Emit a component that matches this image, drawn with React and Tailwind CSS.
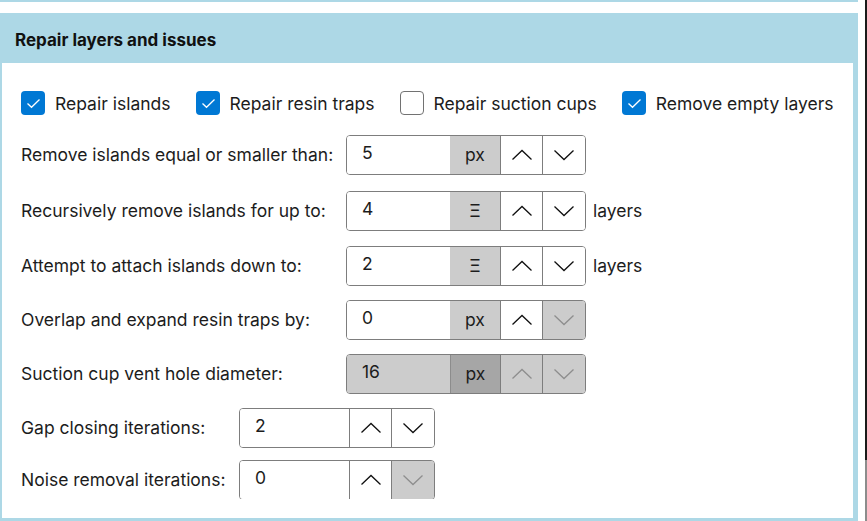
import React from 'react';

const FONT = { fontFamily: 'Inter, "Noto Sans", sans-serif' };

function Chevron({ up, color = '#111' }) {
    return (
        <svg width="22" height="12" viewBox="0 0 22 12" fill="none">
            <polyline
                points={up ? '1.5,10.5 11,1.5 20.5,10.5' : '1.5,1.5 11,10.5 20.5,1.5'}
                stroke={color}
                strokeWidth="1.3"
                strokeLinejoin="miter"
            />
        </svg>
    );
}

function CheckBox({ checked, label }) {
    return (
        <div className="flex items-center gap-[10px]">
            {checked ? (
                <div className="w-[24px] h-[24px] rounded-[4px] bg-[#0078d4] flex items-center justify-center">
                    <svg width="24" height="24" viewBox="0 0 24 24" fill="none">
                        <polyline points="6.5,12.5 10.5,16.3 18.5,8.5" stroke="white" strokeWidth="1.3" />
                    </svg>
                </div>
            ) : (
                <div className="w-[24px] h-[24px] rounded-[4px] border border-[#727272] bg-white" />
            )}
            <span className="text-[17.5px] text-[#1c1c1c] pt-[2px]">{label}</span>
        </div>
    );
}

function NumberBox({ value, unit, disabled, downDisabled, fieldW }) {
    const btn = 'flex items-center justify-center border-l border-[#7d7d7d]';
    return (
        <div className="flex h-[40px] rounded-[4px] border border-[#7d7d7d] overflow-hidden text-[17.5px] text-[#1c1c1c]">
            <div
                className={
                    'flex items-center pl-[15px] pb-[4px] ' + (disabled ? 'bg-[#cccccc]' : 'bg-white')
                }
                style={{ width: fieldW }}
            >
                {value}
            </div>
            {unit && (
                <div
                    className={
                        'w-[50px] flex items-center justify-center ' +
                        (disabled ? 'bg-[#a6a6a6] border-l border-[#8c8c8c]' : 'bg-[#cccccc]')
                    }
                >
                    {unit}
                </div>
            )}
            <div className={btn + ' w-[42px] ' + (disabled ? 'bg-[#cccccc]' : 'bg-white')}>
                <Chevron up color={disabled ? '#8e8e8e' : '#111'} />
            </div>
            <div className={btn + ' w-[43px] ' + (disabled || downDisabled ? 'bg-[#cccccc]' : 'bg-white')}>
                <Chevron color={disabled || downDisabled ? '#8e8e8e' : '#111'} />
            </div>
        </div>
    );
}

function Row({ label, labelW, mt, suffix, ...box }) {
    return (
        <div className="flex items-center h-[40px]" style={{ marginTop: mt }}>
            <div className="text-[17.5px] text-[#1c1c1c] shrink-0" style={{ width: labelW }}>
                {label}
            </div>
            <NumberBox {...box} />
            {suffix && <span className="ml-[7px] text-[17.5px] text-[#1c1c1c]">{suffix}</span>}
        </div>
    );
}

export default function App() {
    return (
        <div className="w-[867px] h-[521px] bg-white flex overflow-hidden" style={FONT}>
            <div className="w-[858px] flex flex-col">
                <div className="h-[2px] bg-[#add8e6]" />
                <div className="h-[11px]" />
                {/* Header */}
                <div className="h-[50px] bg-[#add8e6] flex items-center px-[15px] pt-[5px]">
                    <h2 className="text-[17px] font-bold text-[#111]">Repair layers and issues</h2>
                </div>
                {/* Body */}
                <div className="flex-1 bg-white border-l-2 border-r-[5px] border-b-[3px] border-[#add8e6] pb-[19px]">
                    <div className="h-[436px] overflow-hidden pl-[19px] pt-[28px]">
                        <div className="flex items-center gap-[25px] h-[24px]">
                            <CheckBox checked label="Repair islands" />
                            <CheckBox checked label="Repair resin traps" />
                            <CheckBox label="Repair suction cups" />
                            <CheckBox checked label="Remove empty layers" />
                        </div>
                        <Row mt={20} labelW={325} label="Remove islands equal or smaller than:" value="5" unit="px" fieldW={103} />
                        <Row mt={16} labelW={325} label="Recursively remove islands for up to:" value="4" unit="Ξ" fieldW={103} suffix="layers" />
                        <Row mt={15} labelW={325} label="Attempt to attach islands down to:" value="2" unit="Ξ" fieldW={103} suffix="layers" />
                        <Row mt={14} labelW={325} label="Overlap and expand resin traps by:" value="0" unit="px" fieldW={103} downDisabled />
                        <Row mt={14} labelW={325} label="Suction cup vent hole diameter:" value="16" unit="px" fieldW={103} disabled />
                        <Row mt={14} labelW={218} label="Gap closing iterations:" value="2" fieldW={109} />
                        <Row mt={12} labelW={218} label="Noise removal iterations:" value="0" fieldW={109} downDisabled />
                    </div>
                </div>
            </div>
            <div className="w-[7px]" />
            <div className="w-[2px] flex flex-col">
                <div className="h-[460px] bg-[#1a1a1a]" />
                <div className="flex-1 bg-[#8c8c8c]" />
            </div>
        </div>
    );
}
